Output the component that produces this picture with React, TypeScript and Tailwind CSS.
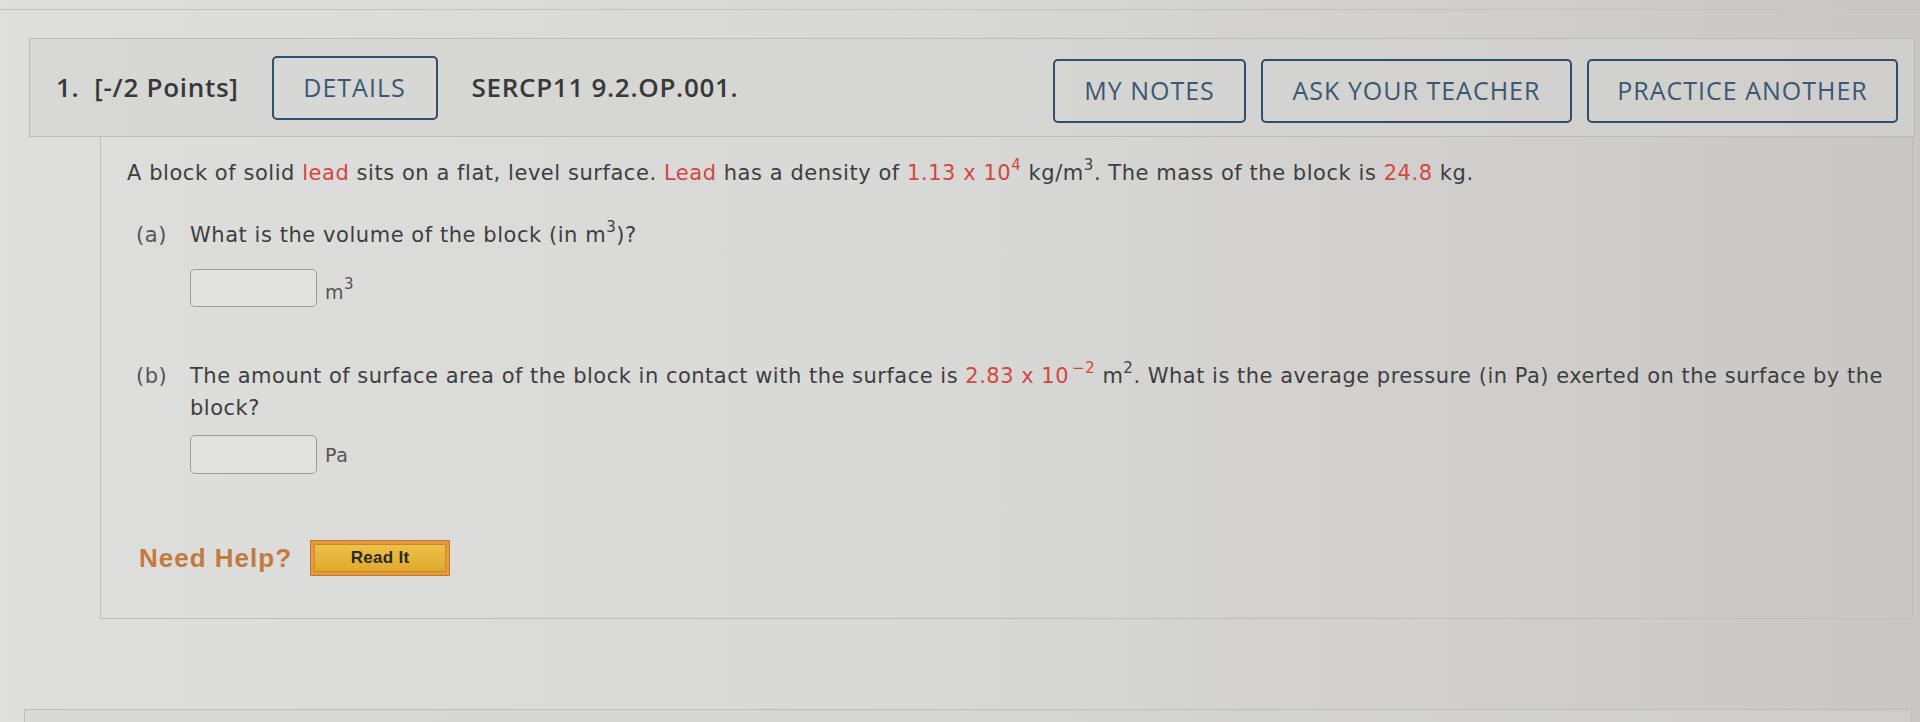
import React from "react";

const sans = { fontFamily: '"Open Sans", "Liberation Sans", sans-serif' };
const verd = { fontFamily: '"DejaVu Sans", Verdana, sans-serif' };
const arial = { fontFamily: '"Liberation Sans", Arial, sans-serif' };

function Btn({ label, w }: { label: string; w: string }) {
  return (
    <div
      className={`${w} h-[64px] flex items-center justify-center rounded-[5px] border-[2.5px] border-[#2f4e6f] text-[25px] text-[#3a5775] tracking-[1px]`}
      style={sans}
    >
      {label}
    </div>
  );
}

function Red({ children }: { children: React.ReactNode }) {
  return <span className="text-[#d4473e]">{children}</span>;
}

function Sup({ children, extra = "" }: { children: React.ReactNode; extra?: string }) {
  return <sup className={`text-[15px] relative -top-[10px] ${extra}`}>{children}</sup>;
}

export default function App() {
  return (
    <div className="w-[1920px] h-[722px] overflow-hidden bg-gradient-to-r from-[#dededd] via-[#d8d8d7] to-[#c9c7c5]">
      <div className="h-[10px] border-b border-[#c2c2c0]" />
      <div className="mt-[28px] ml-[29px] mr-[5px]">
        {/* header */}
        <div className="h-[99px] flex items-center border border-[#bcbcba] bg-[#d3d3d1]/60 pl-[26px] pr-[16px]">
          <span className="text-[26px] font-semibold text-[#383838] tracking-[0.7px]" style={sans}>
            1.&nbsp; [-/2 Points]
          </span>
          <div className="ml-[33px]">
            <Btn label="DETAILS" w="w-[166px]" />
          </div>
          <span className="ml-[34px] text-[26px] font-semibold text-[#383838] tracking-[0.7px]" style={sans}>
            SERCP11 9.2.OP.001.
          </span>
          <div className="ml-auto flex gap-[15px] mt-[6px]">
            <Btn label="MY NOTES" w="w-[193px]" />
            <Btn label="ASK YOUR TEACHER" w="w-[311px]" />
            <Btn label="PRACTICE ANOTHER" w="w-[311px]" />
          </div>
        </div>
        {/* content */}
        <div
          className="ml-[71px] mr-[2px] border-l border-r border-b border-[#bdbdbb] pl-[26px] pt-[20px] pb-[42px] text-[21px] tracking-[0.55px] leading-[32px] text-[#3e3e3e]"
          style={verd}
        >
          <p className="whitespace-nowrap">
            A block of solid <Red>lead</Red> sits on a flat, level surface. <Red>Lead</Red> has a density of{" "}
            <Red>
              1.13 x 10<Sup>4</Sup>
            </Red>{" "}
            kg/m<Sup>3</Sup>. The mass of the block is <Red>24.8</Red> kg.
          </p>

          <div className="mt-[30px] flex ml-[9px]">
            <span className="w-[54px] text-[#555]">(a)</span>
            <div>
              <div>
                What is the volume of the block (in m<Sup>3</Sup>)?
              </div>
              <div className="mt-[18px] flex items-end">
                <div className="w-[127px] h-[38px] rounded-[5px] border border-[#9a9a98] bg-[#e2e2e0]" />
                <span className="ml-[8px] text-[19px] text-[#555] leading-[30px]">
                  m<Sup>3</Sup>
                </span>
              </div>
            </div>
          </div>

          <div className="mt-[53px] flex ml-[9px]">
            <span className="w-[54px] text-[#555]">(b)</span>
            <div>
              <div className="whitespace-nowrap tracking-[0.5px]">
                The amount of surface area of the block in contact with the surface is{" "}
                <Red>
                  2.83 x 10<Sup extra="ml-[3px]">−2</Sup>
                </Red>{" "}
                m<Sup>2</Sup>. What is the average pressure (in Pa) exerted on the surface by the
                <br />
                block?
              </div>
              <div className="mt-[11px] flex items-center">
                <div className="w-[127px] h-[39px] rounded-[5px] border border-[#9a9a98] bg-[#e2e2e0]" />
                <span className="ml-[8px] text-[19px] text-[#555]">Pa</span>
              </div>
            </div>
          </div>

          <div className="mt-[66px] ml-[12px] flex items-center h-[36px]">
            <span className="text-[26px] font-bold text-[#c47a3e] tracking-[1px]" style={arial}>
              Need Help?
            </span>
            <div className="ml-[18px] w-[140px] h-[36px] border border-[#c0782a] bg-[#e69a3e] p-[3px]">
              <div
                className="w-full h-full border border-[#c88a30] bg-gradient-to-b from-[#eec146] to-[#e0a92c] flex items-center justify-center text-[17px] font-bold text-[#2a2a2a] tracking-[0.3px]"
                style={arial}
              >
                Read It
              </div>
            </div>
          </div>
        </div>
      </div>
      <div className="mt-[90px] ml-[24px] mr-[8px] h-[20px] border-t border-l border-r border-[#bdbdbb] bg-[#d4d4d2]/50" />
    </div>
  );
}
